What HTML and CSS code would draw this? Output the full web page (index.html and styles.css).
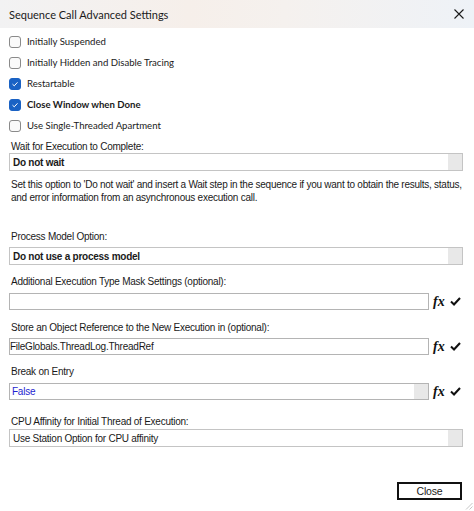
FILE: index.html
```html
<!DOCTYPE html>
<html>
<head>
<meta charset="utf-8">
<link rel="stylesheet" href="styles.css">
</head>
<body>
<div class="window">
  <div class="titlebar">
    <span class="title">Sequence Call Advanced Settings</span>
    <svg class="close-x" width="10" height="10" viewBox="0 0 10 10"><path d="M0.5 0.5 L9.5 9.5 M9.5 0.5 L0.5 9.5" stroke="#1a1a1a" stroke-width="1.1"/></svg>
  </div>
  <div class="content">
    <div class="checks">
      <div class="check-row"><span class="cb"></span><span class="cb-label">Initially Suspended</span></div>
      <div class="check-row"><span class="cb"></span><span class="cb-label">Initially Hidden and Disable Tracing</span></div>
      <div class="check-row"><span class="cb checked"><svg width="12" height="12" viewBox="0 0 12 12"><path d="M3 6.2 L5.1 8.2 L9 4" fill="none" stroke="#fff" stroke-width="1.2"/></svg></span><span class="cb-label">Restartable</span></div>
      <div class="check-row"><span class="cb checked"><svg width="12" height="12" viewBox="0 0 12 12"><path d="M3 6.2 L5.1 8.2 L9 4" fill="none" stroke="#fff" stroke-width="1.2"/></svg></span><span class="cb-label bold">Close Window when Done</span></div>
      <div class="check-row"><span class="cb"></span><span class="cb-label">Use Single-Threaded Apartment</span></div>
    </div>

    <div class="label l-wait">Wait for Execution to Complete:</div>
    <div class="combo"><span class="combo-text bold">Do not wait</span><span class="combo-btn"></span></div>
    <div class="desc">Set this option to 'Do not wait' and insert a Wait step in the sequence if you want to obtain the results, status, and error information from an asynchronous execution call.</div>

    <div class="label l-process">Process Model Option:</div>
    <div class="combo c-process"><span class="combo-text bold">Do not use a process model</span><span class="combo-btn"></span></div>

    <div class="label l-mask">Additional Execution Type Mask Settings (optional):</div>
    <div class="expr-row r-mask">
      <div class="input"></div>
      <span class="fx">fx</span><svg class="tick" width="11" height="9" viewBox="0 0 11 9"><path d="M1 4.6 L4 7.4 L10 1" fill="none" stroke="#111" stroke-width="2.1"/></svg>
    </div>

    <div class="label l-store">Store an Object Reference to the New Execution in (optional):</div>
    <div class="expr-row r-store">
      <div class="input"><span class="input-text">FileGlobals.ThreadLog.ThreadRef</span></div>
      <span class="fx">fx</span><svg class="tick" width="11" height="9" viewBox="0 0 11 9"><path d="M1 4.6 L4 7.4 L10 1" fill="none" stroke="#111" stroke-width="2.1"/></svg>
    </div>

    <div class="label l-break">Break on Entry</div>
    <div class="expr-row r-break">
      <div class="input input-combo"><span class="input-text blue">False</span><span class="combo-btn"></span></div>
      <span class="fx">fx</span><svg class="tick" width="11" height="9" viewBox="0 0 11 9"><path d="M1 4.6 L4 7.4 L10 1" fill="none" stroke="#111" stroke-width="2.1"/></svg>
    </div>

    <div class="label l-cpu">CPU Affinity for Initial Thread of Execution:</div>
    <div class="combo c-cpu"><span class="combo-text">Use Station Option for CPU affinity</span><span class="combo-btn"></span></div>

    <div class="footer">
      <button class="btn-close">Close</button>
    </div>
  </div>
  <svg class="grip" width="8" height="8" viewBox="0 0 8 8"><path d="M7.5 1 L1 7.5 M7.5 4.5 L4.5 7.5" stroke="#b8b8b8" stroke-width="0.8"/></svg>
</div>
</body>
</html>
```

FILE: styles.css
```css
html, body {
  margin: 0;
  padding: 0;
  background: #ffffff;
}

.window {
  position: relative;
  width: 474px;
  height: 511px;
  background: #ffffff;
  font-family: "Liberation Sans", Arial, sans-serif;
  font-size: 10px;
  letter-spacing: -0.25px;
  color: #1a1a1a;
  display: flex;
  flex-direction: column;
  overflow: hidden;
}

.titlebar {
  height: 28px;
  flex: 0 0 28px;
  display: flex;
  align-items: center;
  justify-content: space-between;
  padding: 0 9px 0 9px;
  box-sizing: border-box;
  background: linear-gradient(90deg, #f2f2f3 0%, #f6efea 40%, #f5f1ee 60%, #eef2f7 100%);
}

.title {
  font-family: Lato, "Noto Sans", sans-serif;
  font-size: 11px;
  letter-spacing: 0;
  color: #1a1a1a;
}

.close-x {
  margin-right: 1px;
}

.content {
  flex: 1;
  display: flex;
  flex-direction: column;
  padding: 3px 11px 0 9px;
}

.checks {
  display: flex;
  flex-direction: column;
}

.check-row {
  height: 21px;
  display: flex;
  align-items: center;
  gap: 6px;
}

.cb {
  width: 12px;
  height: 12px;
  box-sizing: border-box;
  border: 1px solid #8a8a8a;
  border-radius: 3px;
  background: #fafafa;
  display: flex;
  align-items: center;
  justify-content: center;
}

.cb.checked {
  background: #1a62c4;
  border-color: #1a62c4;
}

.cb-label {
  font-family: Lato, "Noto Sans", sans-serif;
  font-size: 9.6px;
  letter-spacing: 0;
  color: #1a1a1a;
}

.bold {
  font-weight: bold;
}

.label {
  line-height: 13px;
  height: 13px;
  padding-left: 2px;
  white-space: nowrap;
}

.l-wait { margin-top: 4px; }
.l-process { margin-top: 26px; }
.l-mask { margin-top: 10px; }
.l-store { margin-top: 11px; }
.l-break { margin-top: 10px; }
.l-cpu { margin-top: 15px; }

.combo {
  height: 18px;
  box-sizing: border-box;
  border: 1px solid #c4c4c4;
  background: #ffffff;
  display: flex;
  align-items: center;
}

.c-process { margin-top: 4px; }
.c-cpu { margin-top: 1px; }

.combo-text {
  flex: 1;
  padding-left: 3px;
  white-space: nowrap;
}

.combo-btn {
  align-self: stretch;
  width: 14px;
  background: #e8e8e8;
}

.desc {
  margin-top: 7px;
  line-height: 13px;
  padding-left: 2px;
}

.expr-row {
  display: flex;
  align-items: center;
  height: 17px;
}

.r-mask { margin-top: 5px; }
.r-store { margin-top: 4px; }
.r-break { margin-top: 5px; }

.input {
  width: 420px;
  height: 17px;
  box-sizing: border-box;
  border: 1px solid #b4b4b4;
  background: #ffffff;
  display: flex;
  align-items: center;
}

.input-text {
  flex: 1;
  padding-left: 0px;
  white-space: nowrap;
}

.input-combo .input-text {
  padding-left: 2px;
}

.blue {
  color: #1f1fd0;
}

.fx {
  font-family: "Liberation Serif", "Times New Roman", serif;
  font-style: italic;
  font-weight: bold;
  font-size: 14px;
  letter-spacing: 0;
  margin-left: 4px;
  color: #111;
}

.tick {
  margin-left: 5px;
}

.footer {
  margin-top: auto;
  display: flex;
  justify-content: flex-end;
  padding-bottom: 11px;
}

.btn-close {
  width: 65px;
  height: 18px;
  box-sizing: border-box;
  border: 2px solid #111;
  background: #ffffff;
  font-family: "Liberation Sans", Arial, sans-serif;
  font-size: 10.5px;
  letter-spacing: -0.2px;
  color: #1a1a1a;
  padding: 0;
  margin-right: 1px;
}

.grip {
  position: absolute;
  right: 1px;
  bottom: 1px;
}
```
